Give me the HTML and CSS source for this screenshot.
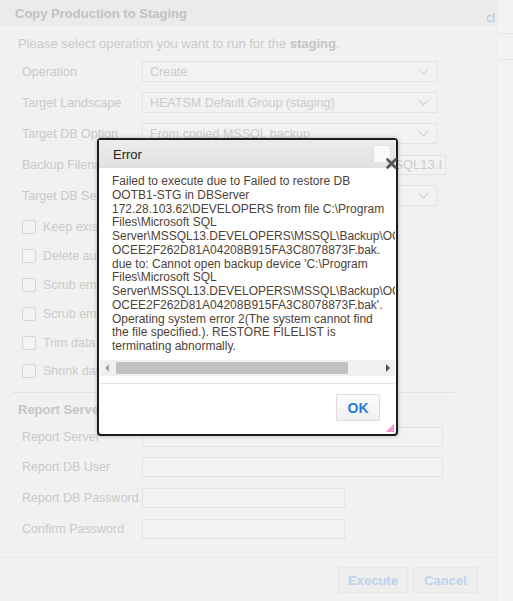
FILE: index.html
```html
<!DOCTYPE html>
<html>
  <head>
    <meta charset="UTF-8" />
    <title>Copy Production to Staging</title>
    <link rel="stylesheet" href="styles.css">
  </head>
  <body>
    <div class="screen">
      <div class="window">
        <div class="window-header">
          <span class="window-title">Copy Production to Staging</span>
          <span class="header-link">cl</span>
        </div>

        <div class="window-body">
          <p class="intro">Please select operation you want to run for the <b>staging</b>.</p>

          <div class="form-row">
            <label class="field-label">Operation</label>
            <div class="select">Create<span class="chevron"></span></div>
          </div>
          <div class="form-row">
            <label class="field-label">Target Landscape</label>
            <div class="select">HEATSM Default Group (staging)<span class="chevron"></span></div>
          </div>
          <div class="form-row">
            <label class="field-label">Target DB Option</label>
            <div class="select">From copied MSSQL backup<span class="chevron"></span></div>
          </div>
          <div class="form-row">
            <label class="field-label">Backup Filename</label>
            <div class="text-box text-box-end"><span>Files\Microsoft SQL Server\MSSQL13.I</span></div>
          </div>
          <div class="form-row">
            <label class="field-label">Target DB Server</label>
            <div class="select">172.28.103.62\DEVELOPERS<span class="chevron"></span></div>
          </div>

          <div class="check-row"><span class="checkbox"></span><span class="check-label">Keep existing database</span></div>
          <div class="check-row"><span class="checkbox"></span><span class="check-label">Delete audit history</span></div>
          <div class="check-row"><span class="checkbox"></span><span class="check-label">Scrub email addresses</span></div>
          <div class="check-row"><span class="checkbox"></span><span class="check-label">Scrub email templates</span></div>
          <div class="check-row"><span class="checkbox"></span><span class="check-label">Trim data tables</span></div>
          <div class="check-row"><span class="checkbox"></span><span class="check-label">Shrink database</span></div>

          <div class="section-line"></div>
          <div class="section-title">Report Server</div>

          <div class="form-row report-row">
            <label class="field-label">Report Server</label>
            <div class="text-box"></div>
          </div>
          <div class="form-row report-row">
            <label class="field-label">Report DB User</label>
            <div class="text-box"></div>
          </div>
          <div class="form-row report-row">
            <label class="field-label">Report DB Password</label>
            <div class="text-box text-box-short"></div>
          </div>
          <div class="form-row report-row">
            <label class="field-label">Confirm Password</label>
            <div class="text-box text-box-short"></div>
          </div>
        </div>

        <div class="window-footer">
          <button class="footer-button execute-button">Execute</button>
          <button class="footer-button cancel-button">Cancel</button>
        </div>
      </div>
      <div class="side-strip">
        <div class="side-line"></div>
        <div class="side-line"></div>
      </div>
    </div>

    <div class="error-dialog">
      <div class="error-header">
        <span class="error-title">Error</span>
        <span class="close-box">
          <svg class="close-icon" width="11" height="11" viewBox="0 0 11 11">
            <path d="M1.5 1.5 L9.5 9.5 M9.5 1.5 L1.5 9.5" stroke="#555" stroke-width="2.6" stroke-linecap="round" />
          </svg>
        </span>
      </div>
      <div class="error-content">
        <div class="error-text">Failed to execute due to Failed to restore DB OOTB1-STG in DBServer 172.28.103.62\DEVELOPERS from file C:\Program Files\Microsoft SQL Server\MSSQL13.DEVELOPERS\MSSQL\Backup\OC OCEE2F262D81A04208B915FA3C8078873F.bak. due to: Cannot open backup device 'C:\Program Files\Microsoft SQL Server\MSSQL13.DEVELOPERS\MSSQL\Backup\OC OCEE2F262D81A04208B915FA3C8078873F.bak'. Operating system error 2(The system cannot find the file specified.). RESTORE FILELIST is terminating abnormally.</div>
        <div class="hscroll">
          <span class="arrow-left"></span>
          <span class="scroll-thumb"></span>
          <span class="scroll-track"></span>
          <span class="arrow-right"></span>
        </div>
      </div>
      <div class="error-footer">
        <button class="ok-button">OK</button>
      </div>
      <svg class="resize-grip" width="8" height="8" viewBox="0 0 8 8">
        <path d="M8 0 L8 8 L0 8 Z" fill="#f57ac0" />
        <path d="M2 8 L8 2 M5 8 L8 5" stroke="#fbd0e8" stroke-width="0.8" />
      </svg>
    </div>
  </body>
</html>
```

FILE: styles.css
```css
html, body {
  margin: 0;
  padding: 0;
}

body {
  width: 513px;
  height: 601px;
  overflow: hidden;
  background-color: #f0f0f0;
  font-family: 'Liberation Sans', Arial, sans-serif;
  font-size: 13px;
  position: relative;
}

.screen {
  display: flex;
  height: 601px;
}

.window {
  width: 497px;
  display: flex;
  flex-direction: column;
  background-color: #f1f1f1;
}

.window-header {
  flex-shrink: 0;
  height: 26px;
  display: flex;
  align-items: center;
  justify-content: space-between;
  padding: 0 2px 0 15px;
  background-color: #ebebeb;
}

.window-title {
  font-weight: bold;
  font-size: 13px;
  color: #c2c2c2;
}

.header-link {
  color: #a9c5ea;
  font-size: 12px;
  margin-top: 10px;
}

.window-body {
  padding: 10px 0 0 0;
  flex: 1;
}

.intro {
  margin: 0 0 9px 18px;
  line-height: 16px;
  color: #cbcbcb;
}

.intro b {
  color: #c4c4c4;
}

.form-row {
  display: flex;
  align-items: center;
  height: 21px;
  margin-bottom: 10px;
  padding-left: 22px;
}

.report-row {
  height: 20px;
  margin-bottom: 10.7px;
}

.field-label {
  width: 120px;
  color: #c9c9c9;
  font-size: 12.5px;
  white-space: nowrap;
}

.select {
  width: 295px;
  height: 21px;
  box-sizing: border-box;
  border: 1px solid #e3e3e3;
  background-color: #f2f2f2;
  color: #cbcbcb;
  padding-left: 7px;
  display: flex;
  align-items: center;
  justify-content: space-between;
  font-size: 12.5px;
}

.chevron {
  width: 6px;
  height: 6px;
  border-right: 1.5px solid #cfcfcf;
  border-bottom: 1.5px solid #cfcfcf;
  transform: rotate(45deg);
  margin: 0 9px 4px 0;
}

.text-box {
  width: 301px;
  height: 20px;
  box-sizing: border-box;
  border: 1px solid #e3e3e3;
  background-color: #f2f2f2;
  color: #cbcbcb;
  overflow: hidden;
  display: flex;
  align-items: center;
  font-size: 13px;
  white-space: nowrap;
}

.text-box-end {
  width: 304px;
  justify-content: flex-end;
  padding-right: 3px;
}

.text-box-short {
  width: 203px;
}

.form-row + .check-row {
  margin-top: -3px;
}

.check-row {
  height: 28.8px;
  display: flex;
  align-items: center;
  padding-left: 22px;
}

.checkbox {
  width: 12px;
  height: 12px;
  border: 1px solid #d6d6d6;
  border-radius: 2px;
  background-color: #f4f4f4;
}

.check-label {
  margin-left: 7px;
  color: #cbcbcb;
  font-size: 12.5px;
}

.section-line {
  height: 1px;
  background-color: #e2e2e2;
  margin: 6px 42px 9px 13px;
}

.section-title {
  margin-left: 18px;
  line-height: 16px;
  font-weight: bold;
  color: #c6c6c6;
  margin-bottom: 9px;
}

.window-footer {
  box-sizing: border-box;
  flex-shrink: 0;
  height: 44px;
  border-top: 1px solid #e8e8e8;
  display: flex;
  justify-content: flex-end;
  align-items: flex-start;
  gap: 5px;
  padding: 9px 19px 0 0;
}

.footer-button {
  height: 26px;
  padding: 0;
  border: 1px solid #e6e6e6;
  border-radius: 2px;
  background-color: #eeeeee;
  color: #bdd1ec;
  font-family: 'Liberation Sans', Arial, sans-serif;
  font-size: 13px;
  font-weight: bold;
}

.execute-button {
  width: 70px;
}

.cancel-button {
  width: 65px;
}

.side-strip {
  flex: 1;
  background-color: #f3f3f3;
  border-left: 1px solid #ececec;
  padding-top: 33px;
}

.side-line {
  height: 1px;
  background-color: #e6e6e6;
  margin-bottom: 25px;
}

/* modal */
.error-dialog {
  position: absolute;
  left: 97px;
  top: 138px;
  width: 297px;
  height: 294px;
  border: 2px solid #1e1e1e;
  border-radius: 4px;
  background-color: #fff;
  box-shadow: 0 0 4px rgba(0, 0, 0, 0.25);
}

.error-header {
  position: relative;
  height: 28px;
  display: flex;
  align-items: center;
  padding-left: 14px;
  background: linear-gradient(#ececec, #e1e1e1);
}

.error-title {
  font-size: 13px;
  color: #222;
}

.close-box {
  position: absolute;
  left: 274px;
  top: 5px;
  width: 16px;
  height: 16px;
  border: 1px solid #e0e0e0;
  border-radius: 2px;
  background-color: #fafafa;
}

.close-icon {
  position: absolute;
  left: 12px;
  top: 12px;
}

.error-content {
  margin: 0 1px;
  border-bottom: 1px solid #e4e4e4;
}

.error-text {
  padding: 7px 8px 6px 12px;
  height: 179px;
  overflow: hidden;
  font-size: 12px;
  line-height: 13.75px;
  color: #4e4338;
}

.hscroll {
  height: 16px;
  background-color: #f1f1f1;
  display: flex;
  align-items: center;
  margin-bottom: 7px;
}

.arrow-left {
  width: 0;
  height: 0;
  border-top: 4px solid transparent;
  border-bottom: 4px solid transparent;
  border-right: 4px solid #a3a3a3;
  margin: 0 7px 0 5px;
}

.scroll-thumb {
  width: 232px;
  height: 12px;
  background-color: #c1c1c1;
}

.scroll-track {
  flex: 1;
}

.arrow-right {
  width: 0;
  height: 0;
  border-top: 4px solid transparent;
  border-bottom: 4px solid transparent;
  border-left: 4px solid #505050;
  margin-right: 5px;
}

.error-footer {
  display: flex;
  justify-content: flex-end;
  padding: 10px 16px 0 0;
}

.ok-button {
  width: 44px;
  height: 27px;
  border: 1px solid #dcdcdc;
  border-radius: 2px;
  background: linear-gradient(#fcfcfc, #f1f1f1);
  color: #2a78e0;
  font-family: 'Liberation Sans', Arial, sans-serif;
  font-size: 14px;
  font-weight: bold;
}

.resize-grip {
  position: absolute;
  right: 2px;
  bottom: 2px;
}
```
